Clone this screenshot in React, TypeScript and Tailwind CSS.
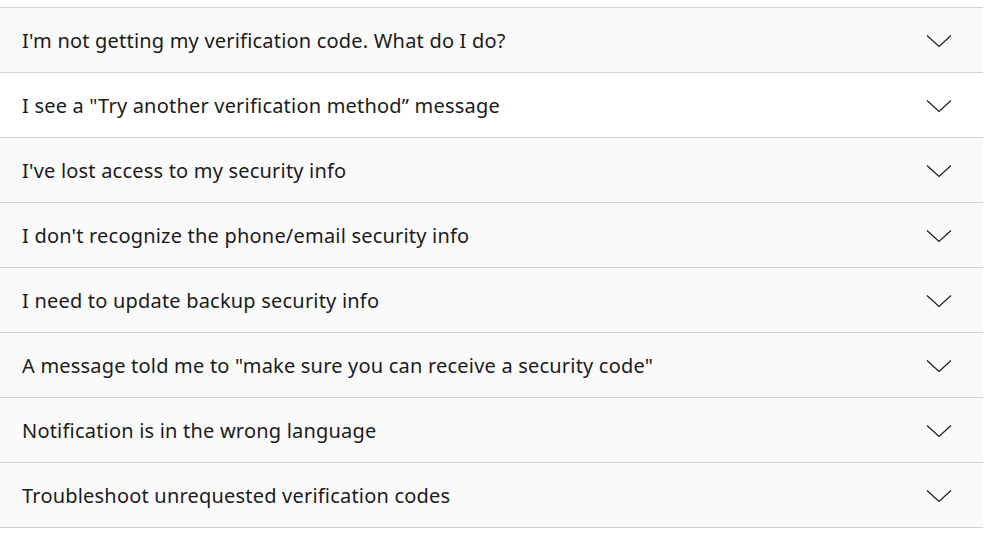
const items = [
  "I'm not getting my verification code. What do I do?",
  "I see a \"Try another verification method\u201d message",
  "I've lost access to my security info",
  "I don't recognize the phone/email security info",
  "I need to update backup security info",
  "A message told me to \"make sure you can receive a security code\"",
  "Notification is in the wrong language",
  "Troubleshoot unrequested verification codes",
];

const Chevron = () => (
  <svg width="26" height="14" viewBox="0 0 26 14" fill="none" aria-hidden="true">
    <path d="M1 1.5 L13 12.5 L25 1.5" stroke="#1b1b1b" strokeWidth="1.2" />
  </svg>
);

export default function App() {
  return (
    <div className="w-[994px] h-[539px] bg-white pt-[7px] font-['Noto_Sans',sans-serif]">
      <div className="w-[983px] border-t border-[#d2d2d2]">
        {items.map((text, i) => (
          <div
            key={i}
            className={`flex h-[65px] items-center justify-between border-b border-[#d2d2d2] pl-[22px] pr-[31px] ${
              i === 1 ? "bg-white" : "bg-[#fafafa]"
            }`}
          >
            <span className="pt-[2px] text-[20px] text-[#1b1b1b] leading-none tracking-[0.2px]">{text}</span>
            <span className="pt-[1px]">
              <Chevron />
            </span>
          </div>
        ))}
      </div>
    </div>
  );
}
